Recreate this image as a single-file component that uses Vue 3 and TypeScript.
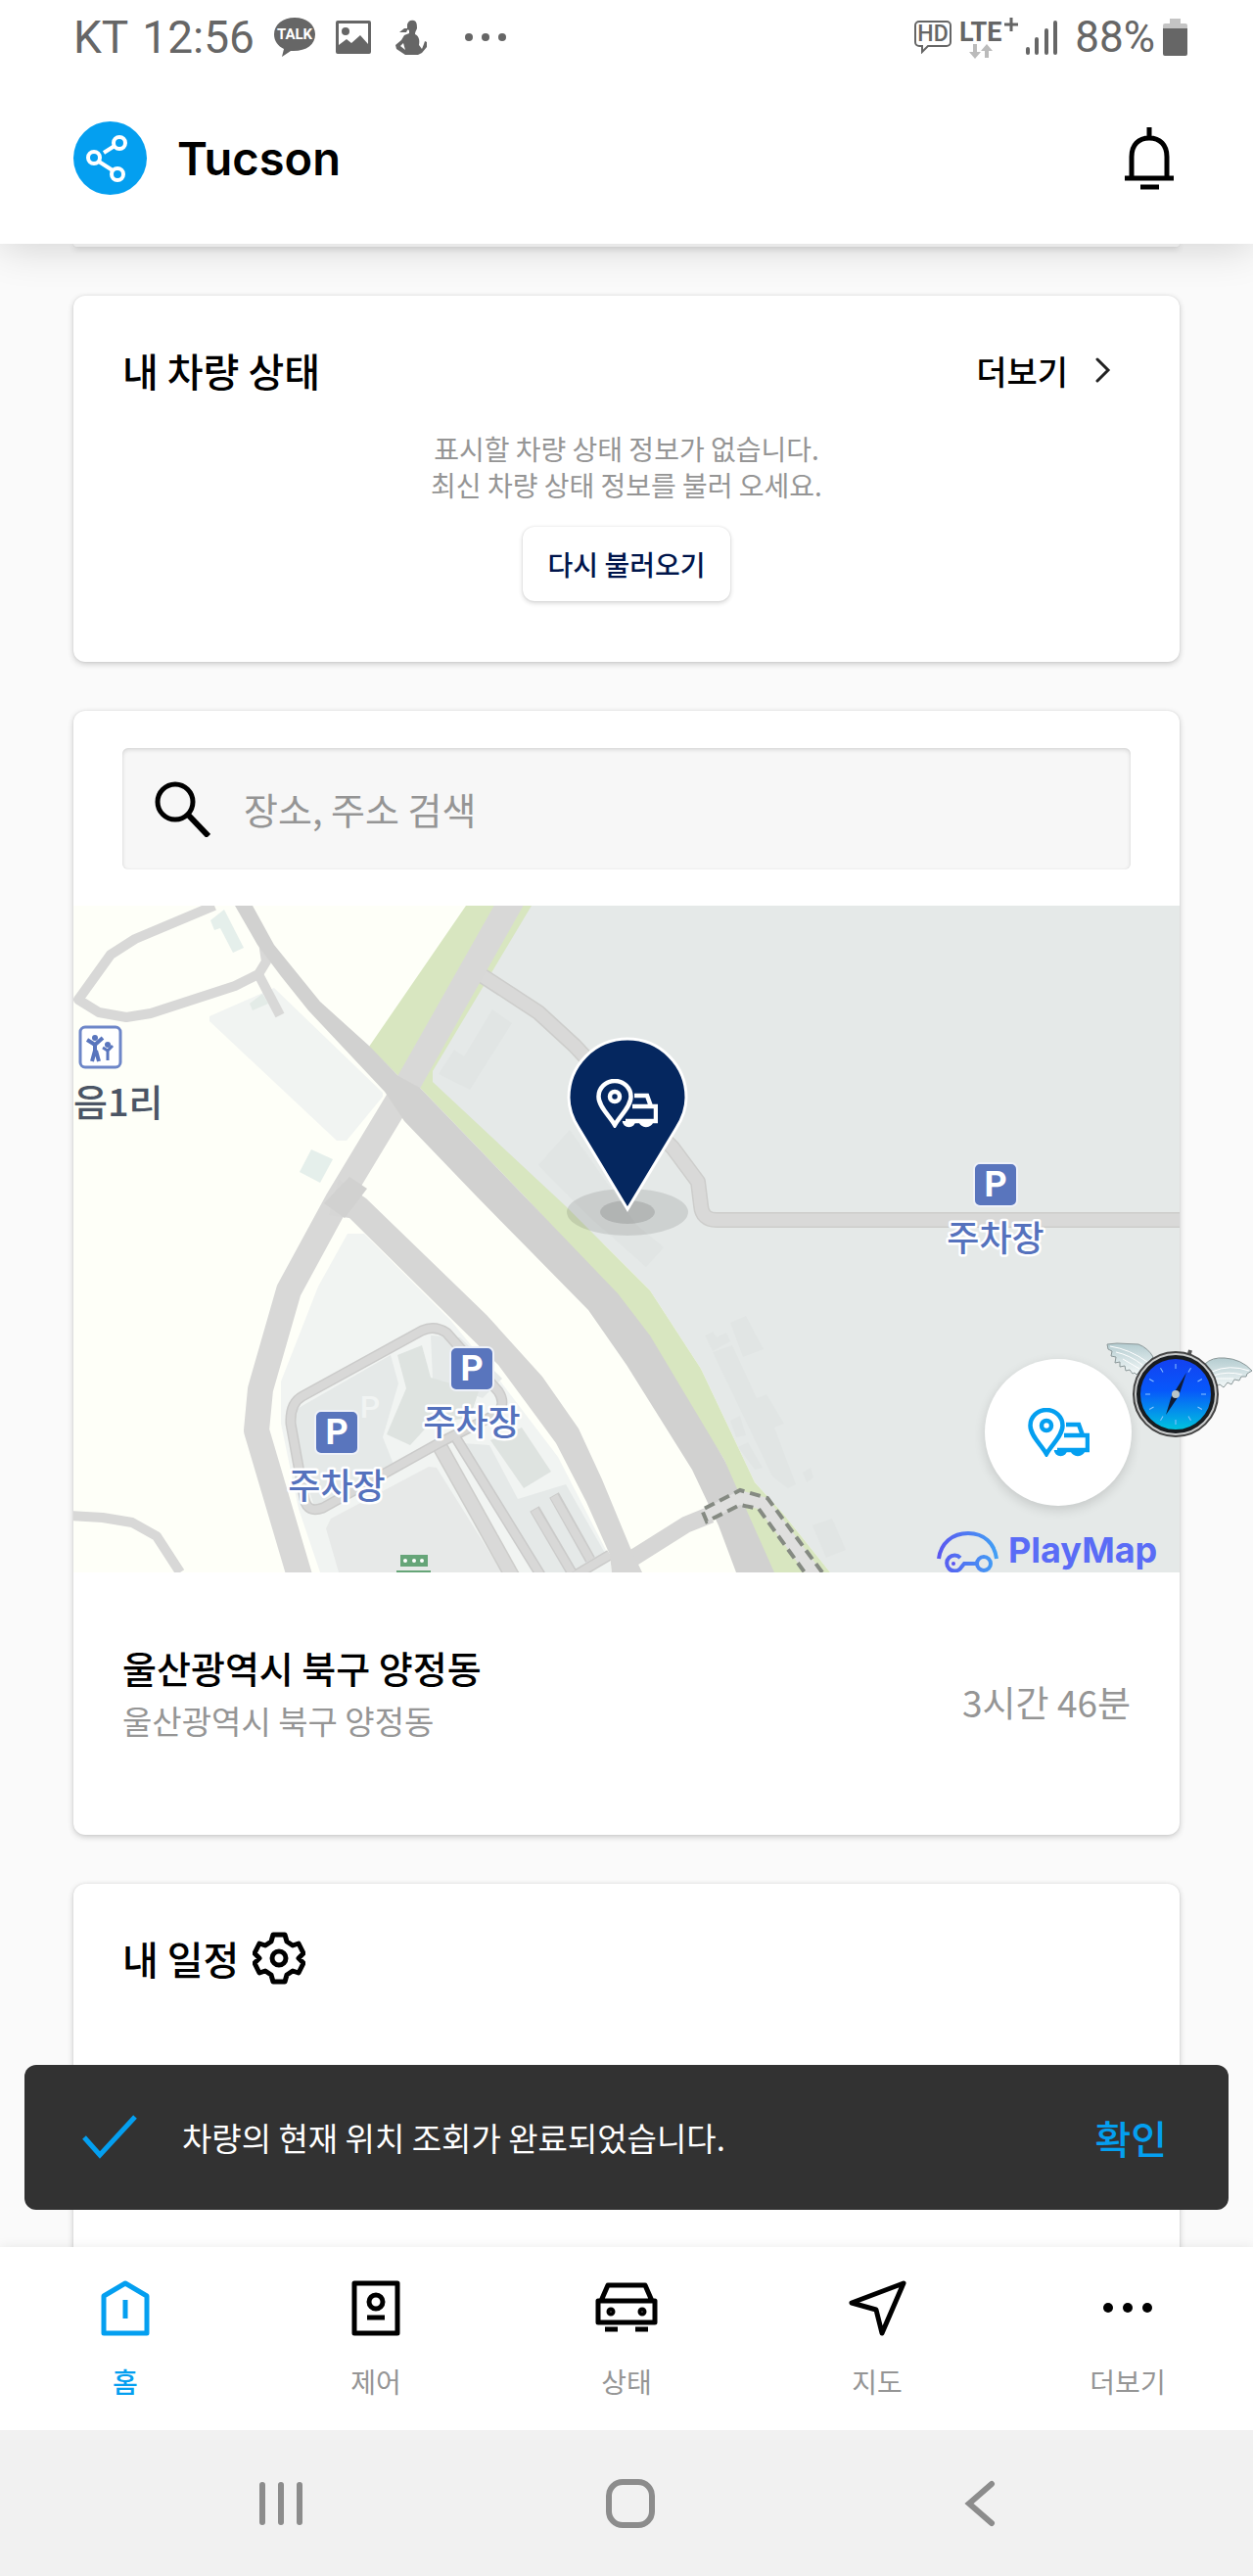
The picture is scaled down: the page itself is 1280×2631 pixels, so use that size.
<script setup lang="ts">
import { ref } from 'vue'

type TabId = 'home' | 'control' | 'status' | 'map' | 'more'

interface Tab {
  id: TabId
  label: string
}

interface ParkingLot {
  x: number
  y: number
}

const tabs: Tab[] = [
  { id: 'home', label: '홈' },
  { id: 'control', label: '제어' },
  { id: 'status', label: '상태' },
  { id: 'map', label: '지도' },
  { id: 'more', label: '더보기' },
]

const parkingLots: ParkingLot[] = [
  { x: 1017, y: 1209 },
  { x: 482, y: 1397 },
  { x: 344, y: 1462 },
]

const activeTab = ref<TabId>('home')
const toastVisible = ref(true)
const query = ref('')
const ticks = Array.from({ length: 12 }, (_, i) => i * 30)
</script>

<template>
  <div class="app">
    <svg class="defs" aria-hidden="true">
      <symbol id="car-pin" viewBox="0 0 64 50">
        <g fill="none" stroke="currentColor" stroke-width="4.500">
          <path d="M20 47C14 37 3.500 28 3.500 18A16.500 16 0 0 1 36.500 18C36.500 28 26 37 20 47Z" />
          <circle cx="20" cy="18" r="5" />
          <path d="M40 17H53L57 28M38 28H62V43H31" />
          <path d="M30 43a4.500 4 0 0 0 9 0M47 43a5 4 0 0 0 10 0" />
        </g>
      </symbol>
    </svg>

    <div class="status-bar">
      <div class="status-group">
        <span class="carrier">KT</span>
        <time class="clock">12:56</time>
        <svg width="42" height="40" viewBox="0 0 42 40">
          <path d="M21 0C9 0 0 7 0 17c0 7 4 12 10 15l-2 8 9-6c15 1 25-6 25-17C42 7 33 0 21 0Z" fill="#666" />
          <text x="21" y="22" class="talk">TALK</text>
        </svg>
        <svg width="38" height="36" viewBox="0 0 38 36">
          <path d="M3 1H35a2 2 0 0 1 2 2V33a2 2 0 0 1-2 2H3a2 2 0 0 1-2-2V3a2 2 0 0 1 2-2ZM4 4V26L12 20 17 24 26 16 34 25V4Z" fill="#666" fill-rule="evenodd" />
          <circle cx="11" cy="12" r="4" fill="#666" />
        </svg>
        <svg width="40" height="36" viewBox="0 0 40 36">
          <g fill="#666">
            <path d="M16 5C17 1 20 0 23 1C26 2 26 6 26 9C25 12 24 12 24 15C28 17 29 21 28 26L31 30L33 25L34 22L36 23V28L31 34L27 36H14L5 30L4 26L10 21L13 16L18 14V11L16 10Z" />
            <path d="M8 13L13 9H17L15 13Z" />
          </g>
          <path d="M12 24L9 27L14 31Z" fill="#fff" />
        </svg>
        <svg width="60" height="12" viewBox="0 0 60 12">
          <g fill="#666">
            <circle cx="19" cy="6" r="4" /><circle cx="36" cy="6" r="4" /><circle cx="53" cy="6" r="4" />
          </g>
        </svg>
      </div>
      <div class="status-group right">
        <svg width="38" height="34" viewBox="0 0 38 34">
          <path d="M5 1H33a4 4 0 0 1 4 4V22a4 4 0 0 1-4 4H14L8 32V26H5a4 4 0 0 1-4-4V5a4 4 0 0 1 4-4Z" fill="none" stroke="#666" stroke-width="2" />
          <text x="19" y="21" class="hd">HD</text>
        </svg>
        <svg width="60" height="44" viewBox="0 0 60 44">
          <text x="0" y="26" class="lte">LTE</text>
          <path d="M53 2V16M46 9H60" stroke="#666" stroke-width="3" />
          <path d="M16 29V38M28 43V34" stroke="#bbb" stroke-width="4" />
          <path d="M10 37H22L16 44ZM22 36H34L28 29Z" fill="#bbb" />
        </svg>
        <svg width="42" height="36" viewBox="0 0 42 36">
          <path d="M2 30V34M11 20V34M21 11V34M30 3V34" stroke="#666" stroke-width="4" stroke-linecap="round" />
        </svg>
        <span class="percent">88%</span>
        <svg width="25" height="38" viewBox="0 0 25 38">
          <path d="M7 0H18V5H23a2 2 0 0 1 2 2V10H0V7a2 2 0 0 1 2-2H7Z" fill="#c4c4c4" />
          <path d="M0 10H25V36a2 2 0 0 1-2 2H2a2 2 0 0 1-2-2Z" fill="#666" />
        </svg>
      </div>
    </div>

    <header class="header">
      <button class="share" aria-label="공유">
        <svg width="75" height="75" viewBox="0 0 75 75">
          <g fill="none" stroke="#fff" stroke-width="4">
            <circle cx="47" cy="22" r="6" />
            <circle cx="21" cy="37" r="6" />
            <circle cx="45" cy="54" r="6" />
            <path d="M42 25L31 32M26 41L40 50" />
          </g>
        </svg>
      </button>
      <h1>Tucson</h1>
      <button class="bell" aria-label="알림">
        <svg width="50" height="64" viewBox="0 0 50 64">
          <path d="M25 0V9M7 50V30C7 18 14 11 25 11S43 18 43 30V50M0 52H50M16 61H35" fill="none" stroke="#000" stroke-width="5" />
        </svg>
      </button>
    </header>

    <main class="content">
      <section class="card peek"></section>

      <section class="card">
        <div class="card-head">
          <h2>내 차량 상태</h2>
          <a href="#status" class="more">
            더보기
            <svg width="16" height="26" viewBox="0 0 16 26">
              <path d="M2 2L13 13L2 24" fill="none" stroke="#222" stroke-width="3" stroke-linecap="round" />
            </svg>
          </a>
        </div>
        <p class="empty">표시할 차량 상태 정보가 없습니다.<br />최신 차량 상태 정보를 불러 오세요.</p>
        <button class="reload">다시 불러오기</button>
      </section>

      <section class="card location">
        <label class="search">
          <svg width="58" height="58" viewBox="0 0 58 58">
            <circle cx="22" cy="22" r="18" fill="none" stroke="#000" stroke-width="5" />
            <path d="M35 35L56 57" stroke="#000" stroke-width="6" />
          </svg>
          <input v-model="query" type="text" placeholder="장소, 주소 검색" aria-label="장소, 주소 검색" />
        </label>

        <div class="map">
          <svg class="map-canvas" viewBox="75 924 1130 681" preserveAspectRatio="xMidYMid slice">
            <rect x="75" y="924" width="1130" height="681" fill="#fefff8" />
            <path d="M541 924H1205V1605H848L800 1545 771 1513 716 1397 664 1317 617 1270 427 1105Z" fill="#e5e9e8" />

            <!-- green belts -->
            <path d="M476 924H543L442 1093V1104L578 1231 617 1270 664 1317 716 1397 771 1513 800 1545 848 1605H780L740 1490 640 1333 535 1220 429 1110 407 1098 377 1068Z" fill="#d8e6c0" />

            <!-- plots and buildings west -->
            <path d="M215 939L229 928 249 967 238 972 225 947 219 949Z" fill="#e5efeb" />
            <path d="M214 1037L280 1008 391 1115V1119L354 1164H344L214 1042Z" fill="#f1f4f2" />
            <path d="M255 1024L268 1014 274 1024 258 1031Z" fill="#e3ebe7" />
            <path d="M318 1173L340 1183 327 1207 306 1196Z" fill="#e5efeb" />
            <path d="M355 1259H372L460 1347 509 1407 570 1487 623 1590 625 1605H327L305 1540 287 1453V1410L325 1313Z" fill="#f1f4f2" />
            <path d="M305 1437L399 1383 407 1412 391 1467 403 1497 346 1530 321 1537 293 1453Z" fill="#e5e9e8" />
            <path d="M440 1363L470 1365 513 1407 493 1427 442 1407Z" fill="#e5e9e8" />
            <path d="M406 1383L431 1373 440 1406 489 1420 480 1447 440 1452 419 1475 395 1464 415 1417Z" fill="#dee3e0" />
            <path d="M333 1560L338 1550 438 1497 446 1498 513 1605H346Z" fill="#e7e9e8" />
            <path d="M472 1473L500 1475 529 1530 578 1515 619 1587 587 1605H550Z" fill="#e5e9e8" />
            <path d="M501 1470L533 1457 563 1502 535 1519Z" fill="#dee3e0" />

            <!-- plots and buildings east -->
            <g fill="#e1e5e4">
              <path d="M503 1030L523 1044 480 1112 448 1096 464 1071 474 1078Z" />
              <path d="M582 1153L550 1189 600 1240 660 1293 678 1273 650 1250Z" />
              <path d="M746 1350L762 1343 780 1377 759 1385Z" />
              <path d="M720 1363L728 1359 732 1365 742 1360 746 1369 728 1379Z" />
              <path d="M728 1380L748 1373 773 1427 783 1423 801 1453 791 1457 813 1515 805 1519 789 1507Z" />
              <path d="M746 1450L756 1445 762 1465 752 1467ZM754 1477L764 1472 779 1498 771 1500Z" />
              <path d="M820 1503L828 1498 831 1508 824 1513ZM830 1557L850 1550 864 1582 844 1590Z" />
            </g>

            <!-- minor roads -->
            <g fill="none" stroke-linejoin="round">
              <g stroke="#d8d8d7" stroke-width="10">
                <path d="M219 924L138 958 113 974 80 1020 101 1033 129 1038 154 1034 240 1006 264 994 272 981 268 955" />
                <path d="M265 996L286 1036" />
                <path d="M70 1547L105 1549 135 1554 160 1568 184 1605" />
              </g>
              <g stroke="#cdcdcb" stroke-width="16">
                <path d="M484 990L521 1014 550 1033 587 1067 655 1140 687 1171 713 1206 716 1230Q717 1245 732 1245H1210" />
                <path d="M448 1474L525 1612" />
              </g>
              <g stroke="#d9d9d8" stroke-width="13">
                <path d="M484 990L521 1014 550 1033 587 1067 655 1140 687 1171 713 1206 716 1230Q717 1245 732 1245H1210" />
                <path d="M448 1474L525 1612" />
              </g>
              <g stroke="#cbcbca" stroke-width="11">
                <path d="M450 1472L330 1539Q314 1545 311 1530L297 1453Q296 1432 309 1425L431 1358Q444 1352 456 1360L509 1420Q520 1437 500 1447Z" />
                <path d="M466 1468L553 1609M546 1540L584 1605M566 1526L603 1592M623 1587L586 1609" />
              </g>
              <g stroke="#d8d8d7" stroke-width="8">
                <path d="M450 1472L330 1539Q314 1545 311 1530L297 1453Q296 1432 309 1425L431 1358Q444 1352 456 1360L509 1420Q520 1437 500 1447Z" />
                <path d="M466 1468L553 1609M546 1541L584 1605M566 1527L603 1592M623 1587L586 1609" />
              </g>
            </g>

            <!-- main roads -->
            <path d="M636 1597L701 1556 726 1546" fill="none" stroke="#d6d6d5" stroke-width="17" />
            <path d="M523 918L415 1109 345 1225 295 1317 266 1418 262 1460 307 1612" fill="none" stroke="#d8d8d7" stroke-width="26" stroke-linejoin="round" />
            <path d="M346 1204L374 1223 497 1342 554 1405 591 1458 615 1510 644 1580 656 1605H625L623 1587 599 1533 568 1473 509 1393 448 1333 357 1243 336 1240Z" fill="#d6d6d5" />
            <path d="M240 924H258L280 964 327 1022 378 1068 407 1098 429 1110 535 1220 631 1320 664 1363 740 1490 762 1540 791 1605H752L734 1557 707 1500 640 1393 601 1337 486 1220 413 1144 393 1114 315 1031 287 996 263 964Z" fill="#d1d1d0" />
            <path d="M357 1201L375 1213 352 1243 331 1228Z" fill="#d1d1d0" />

            <!-- underpass -->
            <path d="M717 1541L756 1521 784 1529 840 1605H822L775 1540 756 1536 722 1553Z" fill="#dfdfde" />
            <path d="M840 1605L784 1529 756 1521 717 1541 722 1553 756 1536 775 1540 822 1605" fill="none" stroke="#858a82" stroke-width="4" stroke-dasharray="11 6" />

            <!-- points of interest -->
            <text x="378" y="1447" class="ghost">P</text>
            <g v-for="lot in parkingLots" :key="lot.x">
              <rect :x="lot.x - 22" :y="lot.y - 22" width="44" height="44" rx="6" fill="#5975bd" stroke="#eef1f8" stroke-width="2" />
              <text :x="lot.x" :y="lot.y + 12" class="parking-mark">P</text>
              <text :x="lot.x" :y="lot.y + 68" class="poi">주차장</text>
            </g>
            <rect x="82" y="1048" width="41" height="41" rx="5" fill="#fff" stroke="#6d86c8" stroke-width="3" />
            <g fill="none" stroke="#5975bd" stroke-width="4">
              <path d="M89 1061L97 1066 105 1059M97 1066V1076M97 1072L94 1083M98 1072L101 1083" />
              <path d="M105 1069L110 1072 115 1067M110 1072V1082" stroke-width="3" />
            </g>
            <circle cx="97" cy="1059" r="3" fill="#5975bd" />
            <circle cx="110" cy="1066" r="3" fill="#5975bd" />
            <text x="75" y="1139" class="village">음1리</text>
            <path d="M409 1587H437V1599H409ZM405 1603H440V1605H405Z" fill="#66a578" />
            <g fill="#fff"><circle cx="414" cy="1593" r="2" /><circle cx="423" cy="1593" r="2" /><circle cx="431" cy="1593" r="2" /></g>

            <!-- vehicle position -->
            <ellipse cx="641" cy="1237" rx="62" ry="24" fill="#000" opacity=".1" />
            <ellipse cx="641" cy="1237" rx="28" ry="12" fill="#000" opacity=".12" />
            <path d="M641 1234L591 1151C584 1140 581 1130 581 1120A60 60 0 0 1 701 1120C701 1130 698 1140 691 1151Z" fill="#05275f" stroke="#fff" stroke-width="3" />
            <use href="#car-pin" x="608" y="1101" width="64" height="50" color="#fff" />

            <!-- map provider -->
            <defs>
              <linearGradient id="brand" x1="957" x2="1020" y1="0" y2="0" gradientUnits="userSpaceOnUse">
                <stop offset="0" stop-color="#5b55f0" /><stop offset="1" stop-color="#41a2f5" />
              </linearGradient>
            </defs>
            <g fill="none" stroke="url(#brand)" stroke-width="4">
              <path d="M959 1591C961 1575 973 1565 989 1565S1016 1575 1018 1591" />
              <path d="M981 1590A8 8 0 1 0 981 1601L985 1596H997" />
              <circle cx="1005" cy="1596" r="7" />
            </g>
            <circle cx="974" cy="1596" r="2" fill="#5b55f0" />
            <text x="1030" y="1595" class="brand">PlayMap</text>
          </svg>

          <button class="locate" aria-label="내 차량 위치">
            <svg width="64" height="50"><use href="#car-pin" /></svg>
          </button>

          <svg class="compass" width="150" height="98" viewBox="0 0 150 98" role="img" aria-label="나침반">
            <defs>
              <linearGradient id="dial" x1="0" y1="0" x2="0" y2="1">
                <stop offset="0" stop-color="#1440f0" /><stop offset=".45" stop-color="#0758fb" /><stop offset="1" stop-color="#00c8dc" />
              </linearGradient>
              <linearGradient id="wing" x1="0" y1="0" x2="0" y2="1">
                <stop offset="0" stop-color="#b4ccd0" /><stop offset="1" stop-color="#f3f8f8" />
              </linearGradient>
            </defs>
            <g fill="url(#wing)" stroke="#8b9899" stroke-width="1">
              <path d="M1 2L11 1 33 2Q43 6 48 15L31 33 29 31 27 32 24 28 20 29 19 24 14 25 14 20 9 21 10 15 5 14 6 9 2 7Z" />
              <path d="M101 22Q108 15 121 16Q138 17 149 29L144 32 143 35 138 35 136 39 131 38 128 43 124 41 120 46 116 43 112 45 109 40Z" />
            </g>
            <g fill="none" stroke="#fff" stroke-width="1">
              <path d="M4 4Q24 7 42 20M10 10Q24 13 37 23M17 17L34 27" />
              <path d="M146 29Q126 22 108 30M139 33Q124 29 109 34M130 37L111 37" />
            </g>
            <path d="M84 15L86 8" stroke="#555" stroke-width="4" />
            <circle cx="71" cy="53" r="43" fill="#c8caca" stroke="#444" stroke-width="2" />
            <circle cx="71" cy="53" r="38" fill="url(#dial)" stroke="#181c20" stroke-width="4" />
            <path v-for="a in ticks" :key="a" d="M71 22V27" :transform="`rotate(${a} 71 53)`" stroke="#8ec4ff" stroke-width="1" />
            <path d="M82 31L74 55 69 52Z" fill="#101c35" />
            <path d="M61 74L68 51 74 55Z" fill="#101c35" />
            <circle cx="71" cy="53" r="4" fill="#b8c4c8" />
          </svg>
        </div>

        <div class="address-row">
          <div class="address">
            <strong>울산광역시 북구 양정동</strong>
            <span>울산광역시 북구 양정동</span>
          </div>
          <time class="elapsed">3시간 46분</time>
        </div>
      </section>

      <section class="card schedule">
        <div class="card-head">
          <h2>내 일정</h2>
          <button class="gear" aria-label="일정 설정">
            <svg width="54" height="54" viewBox="0 0 54 54">
              <g fill="none" stroke="#000" stroke-width="5" stroke-linejoin="round">
                <path d="M21 3H33L35 10 41 14 47 12 52 22 47 27 52 32 47 42 41 40 35 44 33 51H21L19 44 13 40 7 42 2 32 7 27 2 22 7 12 13 14 19 10Z" />
                <circle cx="27" cy="27" r="7" />
              </g>
            </svg>
          </button>
        </div>
      </section>

      <div v-if="toastVisible" class="toast" role="status">
        <svg width="56" height="46" viewBox="0 0 56 46">
          <path d="M2 23L18 41L54 2" fill="none" stroke="#049ff0" stroke-width="5" />
        </svg>
        <span>차량의 현재 위치 조회가 완료되었습니다.</span>
        <button @click="toastVisible = false">확인</button>
      </div>
    </main>

    <nav class="tabs">
      <a v-for="tab in tabs" :key="tab.id" :href="`#${tab.id}`" class="tab" :class="{ active: tab.id === activeTab }" @click="activeTab = tab.id">
        <svg width="64" height="60" viewBox="0 0 64 60">
          <g fill="none" stroke="currentColor" stroke-width="5" stroke-linejoin="round">
            <path v-if="tab.id === 'home'" d="M32 5L54 18V56H10V18ZM32 22V41" />
            <template v-else-if="tab.id === 'control'">
              <rect x="10" y="5" width="44" height="51" />
              <circle cx="32" cy="24" r="7" />
              <path d="M23 40H41" />
            </template>
            <template v-else-if="tab.id === 'status'">
              <path d="M6 23L13 7H51L58 23M3 23H61V45H3ZM10 52H23M41 52H54" />
              <circle cx="16" cy="34" r="2" /><circle cx="48" cy="34" r="2" />
            </template>
            <path v-else-if="tab.id === 'map'" d="M59 5L6 25 31 32 37 56Z" />
            <g v-else fill="currentColor" stroke="none">
              <circle cx="12" cy="30" r="5" /><circle cx="32" cy="30" r="5" /><circle cx="52" cy="30" r="5" />
            </g>
          </g>
        </svg>
        <span>{{ tab.label }}</span>
      </a>
    </nav>

    <div class="system-bar">
      <button aria-label="최근 앱">
        <svg width="50" height="50" viewBox="0 0 50 50">
          <path d="M6 6V44M25 6V44M44 6V44" />
        </svg>
      </button>
      <button aria-label="홈 화면">
        <svg width="50" height="50" viewBox="0 0 50 50">
          <rect x="3" y="3" width="44" height="44" rx="14" />
        </svg>
      </button>
      <button aria-label="뒤로">
        <svg width="50" height="50" viewBox="0 0 50 50">
          <path d="M37 5L14 25L37 45" />
        </svg>
      </button>
    </div>
  </div>
</template>

<style>
body {
  background: #fafafa;
}
</style>

<style scoped>
.app {
  display: flex;
  flex-direction: column;
  height: 100vh;
  overflow: hidden;
  background: #fafafa;
  color: #000;
  font-family: "Noto Sans CJK KR", sans-serif;
}

.defs {
  position: absolute;
  width: 0;
  height: 0;
}

svg {
  flex: none;
  display: block;
}

button {
  padding: 0;
  border: 0;
  background: none;
  color: inherit;
  font: inherit;
  cursor: pointer;
}

a {
  color: inherit;
  text-decoration: none;
}

h1,
h2,
p {
  margin: 0;
}

.status-bar {
  position: relative;
  z-index: 3;
  flex: none;
  display: flex;
  justify-content: space-between;
  align-items: center;
  height: 76px;
  padding: 0 67px 0 75px;
  background: #fff;
  color: #666;
  font-family: Roboto, sans-serif;
}

.status-group {
  display: flex;
  align-items: center;
  gap: 20px;
}

.status-group.right {
  gap: 8px;
}

.carrier {
  margin-right: -6px;
  font-size: 46px;
}

.clock {
  font-size: 46px;
}

.percent {
  font-size: 44px;
}

.talk {
  fill: #fff;
  font: 700 15px Roboto, sans-serif;
  text-anchor: middle;
}

.hd {
  fill: #666;
  font: 500 23px Roboto, sans-serif;
  text-anchor: middle;
}

.lte {
  fill: #666;
  font: 700 27px Roboto, sans-serif;
}

.header {
  position: relative;
  z-index: 2;
  flex: none;
  display: flex;
  align-items: center;
  height: 173px;
  padding: 0 81px 2px 75px;
  box-sizing: border-box;
  background: #fff;
  box-shadow: 0 4px 40px rgba(0, 0, 0, 0.16);
}

.share {
  border-radius: 50%;
  background: #049ff0;
}

h1 {
  flex: 1;
  margin-left: 31px;
  font: 600 47px/60px Inter, sans-serif;
}

.content {
  position: relative;
  flex: 1;
  min-height: 0;
  overflow: hidden;
  padding: 0 75px;
}

.card {
  margin-bottom: 50px;
  border-radius: 12px;
  background: #fff;
  box-shadow: 0 2px 6px rgba(0, 0, 0, 0.2), 0 0 2px rgba(0, 0, 0, 0.1);
}

.peek {
  height: 3px;
  border-radius: 0 0 12px 12px;
}

.card-head {
  display: flex;
  align-items: center;
  height: 56px;
  padding: 48px 70px 0 50px;
}

h2 {
  font-size: 40px;
  font-weight: 500;
  line-height: 56px;
}

.more {
  display: flex;
  align-items: center;
  gap: 28px;
  margin-left: auto;
  font-size: 34px;
  font-weight: 500;
}

.empty {
  margin-top: 34px;
  color: #959595;
  font-size: 28px;
  line-height: 37px;
  text-align: center;
}

.reload {
  display: block;
  margin: 24px auto 0;
  padding: 0 26px;
  border-radius: 12px;
  box-shadow: 0 2px 5px rgba(0, 0, 0, 0.16), 0 0 2px rgba(0, 0, 0, 0.14);
  color: #00154b;
  font-size: 28px;
  font-weight: 500;
  line-height: 76px;
}

.card:has(.reload) {
  padding-bottom: 62px;
}

.location {
  padding-top: 38px;
}

.search {
  display: flex;
  align-items: center;
  gap: 34px;
  height: 124px;
  margin: 0 50px 37px;
  padding: 0 32px;
  box-sizing: border-box;
  border-radius: 6px;
  background: #f7f7f7;
  box-shadow: inset 0 2px 4px rgba(0, 0, 0, 0.12), inset 0 0 2px rgba(0, 0, 0, 0.08);
}

.search input {
  flex: 1;
  min-width: 0;
  padding: 0;
  border: 0;
  outline: 0;
  background: none;
  font: 400 38px/56px "Noto Sans CJK KR", sans-serif;
}

.search input::placeholder {
  color: #959595;
  opacity: 1;
}

.map {
  position: relative;
}

.map-canvas {
  width: 100%;
  height: 681px;
}

.parking-mark {
  fill: #fff;
  font: 700 36px Roboto, sans-serif;
  text-anchor: middle;
}

.ghost {
  fill: #f1f4f3;
  font: 500 32px Roboto, sans-serif;
  text-anchor: middle;
}

.poi {
  fill: #5572bd;
  stroke: #fff;
  stroke-width: 5px;
  stroke-linejoin: round;
  paint-order: stroke;
  font: 500 36px "Noto Sans CJK KR", sans-serif;
  text-anchor: middle;
}

.village {
  fill: #4b5565;
  font: 500 38px "Noto Sans CJK KR", sans-serif;
}

.brand {
  fill: #5a6cf6;
  font: 700 36px Inter, sans-serif;
}

.locate {
  position: absolute;
  right: 49px;
  bottom: 68px;
  display: grid;
  place-items: center;
  width: 150px;
  height: 150px;
  border-radius: 50%;
  background: #fff;
  color: #049ff0;
  box-shadow: 0 4px 12px rgba(0, 0, 0, 0.14);
}

.compass {
  position: absolute;
  right: -75px;
  bottom: 137px;
}

.address-row {
  display: flex;
  justify-content: space-between;
  align-items: center;
  height: 268px;
  padding: 0 50px;
}

.address {
  display: flex;
  flex-direction: column;
  padding-bottom: 20px;
  line-height: 54px;
}

.address strong {
  font-size: 38px;
  font-weight: 500;
}

.address span {
  color: #959595;
  font-size: 33px;
}

.elapsed {
  padding-bottom: 4px;
  color: #959595;
  font-size: 37px;
}

.schedule {
  height: 600px;
}

.gear {
  margin-left: 14px;
}

.toast {
  position: absolute;
  right: 25px;
  bottom: 38px;
  left: 25px;
  display: flex;
  align-items: center;
  height: 148px;
  padding: 0 63px 0 59px;
  box-sizing: border-box;
  border-radius: 12px;
  background: #323232;
  color: #fff;
  font-size: 33px;
}

.toast span {
  flex: 1;
  margin-left: 46px;
}

.toast button {
  color: #049ff0;
  font-size: 40px;
  font-weight: 500;
}

.tabs {
  position: relative;
  z-index: 1;
  flex: none;
  display: grid;
  grid-template-columns: repeat(5, 1fr);
  height: 187px;
  background: #fff;
  box-shadow: 0 0 12px rgba(0, 0, 0, 0.08);
}

.tab {
  display: flex;
  flex-direction: column;
  align-items: center;
  gap: 25px;
  padding-top: 32px;
}

.tab span {
  color: #959595;
  font-size: 28px;
  line-height: 40px;
}

.tab.active,
.tab.active span {
  color: #049ff0;
}

.tab.active span {
  font-weight: 500;
}

.system-bar {
  position: relative;
  z-index: 2;
  flex: none;
  display: grid;
  grid-template-columns: repeat(3, 1fr);
  height: 149px;
  padding: 0 100px 0 108px;
  background: #f1f1f1;
}

.system-bar button {
  display: grid;
  place-items: center;
}

.system-bar svg {
  fill: none;
  stroke: #8c8c8c;
  stroke-width: 6;
  stroke-linecap: round;
}
</style>
